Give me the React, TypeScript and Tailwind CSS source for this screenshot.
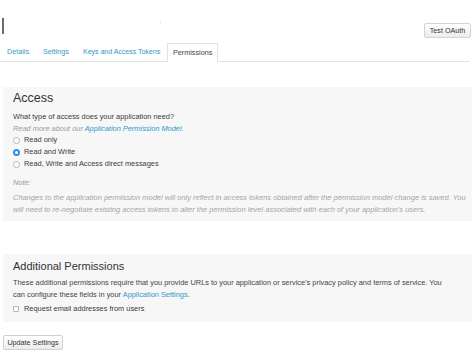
import React from 'react';

const font = { fontFamily: '"Liberation Sans", Arial, sans-serif' };

const Radio: React.FC<{ checked?: boolean; label: string }> = ({ checked, label }) => (
  <div className="flex items-center h-[12px] gap-[4px]">
    {checked ? (
      <span className="w-[7px] h-[7px] rounded-full bg-[#2f8fe6] flex items-center justify-center">
        <span className="w-[3px] h-[3px] rounded-full bg-white" />
      </span>
    ) : (
      <span className="w-[7px] h-[7px] rounded-full border border-[#b5b5b5] bg-white" />
    )}
    <span>{label}</span>
  </div>
);

export default function App() {
  return (
    <div className="w-[474px] h-[351px] bg-white text-[#3a3a3a] text-[7.4px] leading-[12px] overflow-hidden" style={font}>
      {/* header */}
      <div className="relative h-[43px]">
        <div className="absolute left-[2px] top-[18px] w-[1.5px] h-[16px] bg-[#6b6b6b]" />
        <div className="absolute left-[160px] top-[22px] w-[1px] h-[1px] bg-[#cfcfcf]" />
        <button className="absolute left-[424px] top-[23px] w-[47px] h-[15px] rounded-[2px] border border-[#d4d4d4] bg-gradient-to-b from-white to-[#ececec] text-[#333] text-[7.2px] leading-[13px]">
          Test OAuth
        </button>
      </div>

      {/* tabs */}
      <div className="flex items-end h-[19px] border-b border-[#e3e3e3] mr-[4px] text-[7.2px]">
        <span className="text-[#3a97c4] ml-[7px] pb-[3px]">Details</span>
        <span className="text-[#3a97c4] ml-[14px] pb-[3px]">Settings</span>
        <span className="text-[#3a97c4] ml-[14px] pb-[3px] tracking-[-0.1px]">Keys and Access Tokens</span>
        <div className="ml-[7px] h-[19px] w-[51px] border border-b-0 border-[#e3e3e3] bg-white mb-[-1px] flex items-center justify-center text-[#444]">
          Permissions
        </div>
      </div>

      <div className="h-[25px]" />

      {/* Access panel */}
      <div className="ml-[3px] mr-[2px] bg-[#f7f7f7] h-[134px] px-[10px] pt-[3px]">
        <div className="text-[12.5px] leading-[16px] text-[#333]">Access</div>
        <div className="mt-[5px]">What type of access does your application need?</div>
        <div className="italic text-[#9a9a9a] h-[11px] leading-[11px]">
          Read more about our <span className="text-[#2e9bc9]">Application Permission Model</span>.
        </div>
        <Radio label="Read only" />
        <Radio checked label="Read and Write" />
        <Radio label="Read, Write and Access direct messages" />
        <div className="italic text-[#9a9a9a] mt-[7px]">Note:</div>
        <div className="italic text-[#a5a5a5] mt-[3px] text-[7.5px] mr-[-9px]">
          Changes to the application permission model will only reflect in access tokens obtained after the permission model change is saved. You will need to re-negotiate existing access tokens to alter the permission level associated with each of your application’s users.
        </div>
      </div>

      <div className="h-[33px]" />

      {/* Additional permissions */}
      <div className="ml-[3px] mr-[2px] bg-[#f7f7f7] h-[68px] px-[10px] pt-[5px]">
        <div className="text-[11px] leading-[15px] text-[#333]">Additional Permissions</div>
        <div className="mt-[3px] text-[#444] pr-[20px]">
          These additional permissions require that you provide URLs to your application or service’s privacy policy and terms of service. You can configure these fields in your <span className="text-[#2e9bc9]">Application Settings</span>.
        </div>
        <div className="flex items-center gap-[5px] h-[12px] mt-[2px]">
          <span className="w-[6px] h-[6px] rounded-[1px] border border-[#b5b5b5] bg-white" />
          <span>Request email addresses from users</span>
        </div>
      </div>

      <div className="h-[13px]" />
      <button className="ml-[3px] w-[60px] h-[15px] rounded-[2px] border border-[#d0d0d0] bg-gradient-to-b from-white to-[#ececec] text-[#333] text-[7.2px] leading-[13px]">
        Update Settings
      </button>
    </div>
  );
}
